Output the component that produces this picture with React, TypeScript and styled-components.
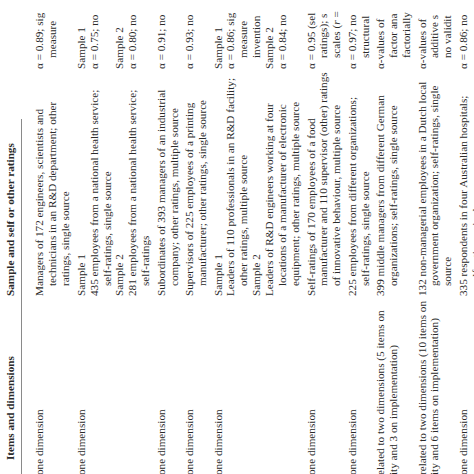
import { Fragment } from "react";
import styled, { createGlobalStyle } from "styled-components";

const GlobalStyle = createGlobalStyle`
  html, body {
    margin: 0;
    padding: 0;
    background: #fff;
  }
`;

const COLUMNS = "179px 227px 1fr";

const Frame = styled.div`
  width: 474px;
  height: 474px;
  overflow: hidden;
  background: #fff;
`;

// the page is a table printed sideways, so it is laid out upright and turned
const Sheet = styled.div`
  width: 474px;
  height: 474px;
  transform: rotate(-90deg);
  font-family: "Liberation Serif", "Times New Roman", serif;
  font-size: 11.2px;
  line-height: 12.9px;
  color: #2b2b2b;
`;

const Head = styled.div`
  display: grid;
  grid-template-columns: ${COLUMNS};
  margin-left: -1px;
`;

const HeadCell = styled.div<{ $indent?: number }>`
  padding: 4px 0 4px ${(p) => p.$indent ?? 0}px;
  font-weight: bold;
  white-space: nowrap;
`;

const HeadRule = styled.div`
  grid-column: 1 / 3;
  height: 1px;
  margin-right: 50px;
  background: #8a8a8a;
`;

const Body = styled.div`
  display: grid;
  grid-template-columns: ${COLUMNS};
  row-gap: 2.6px;
  padding-top: 11.5px;
  margin-left: -1px;
`;

const Cell = styled.div`
  display: flex;
  flex-direction: column;
  min-width: 0;
`;

const Line = styled.div<{ $indent?: number }>`
  min-height: 12.9px;
  padding-left: ${(p) => p.$indent ?? 0}px;
  white-space: nowrap;
`;

type Text = string | { t: string; i: number };

interface IRow {
  items: Text[];
  sample: Text[];
  rel: Text[];
}

const s = (t: string): Text => ({ t, i: 10 });
const r = (t: string): Text => ({ t, i: 11 });

const rows: IRow[] = [
  {
    items: ["one dimension"],
    sample: [
      "Managers of 172 engineers, scientists and",
      s("technicians in an R&D department; other"),
      s("ratings, single source"),
    ],
    rel: ["α = 0.89; sig", r("measure")],
  },
  {
    items: ["one dimension"],
    sample: [
      "Sample 1",
      "435 employees from a national health service;",
      s("self-ratings, single source"),
      "Sample 2",
      "281 employees from a national health service;",
      s("self-ratings"),
    ],
    rel: ["Sample 1", "α = 0.75; no", "", "Sample 2", "α = 0.80; no"],
  },
  {
    items: ["one dimension"],
    sample: [
      "Subordinates of 393 managers of an industrial",
      s("company; other ratings, multiple source"),
    ],
    rel: ["α = 0.91; no"],
  },
  {
    items: ["one dimension"],
    sample: [
      "Supervisors of 225 employees of a printing",
      s("manufacturer; other ratings, single source"),
    ],
    rel: ["α = 0.93; no"],
  },
  {
    items: ["one dimension"],
    sample: [
      "Sample 1",
      "Leaders of 110 professionals in an R&D facility;",
      s("other ratings, multiple source"),
      "Sample 2",
      "Leaders of R&D engineers working at four",
      s("locations of a manufacturer of electronic"),
      s("equipment; other ratings, multiple source"),
    ],
    rel: [
      "Sample 1",
      "α = 0.86; sig",
      r("measure"),
      r("invention"),
      "Sample 2",
      "α = 0.84; no",
    ],
  },
  {
    items: ["one dimension"],
    sample: [
      "Self-ratings of 170 employees of a food",
      s("manufacturer and 110 supervisor (other) ratings"),
      s("of innovative behaviour, multiple source"),
    ],
    rel: ["α = 0.95 (sel", r("ratings); s"), r("scales (r =")],
  },
  {
    items: ["one dimension"],
    sample: [
      "225 employees from different organizations;",
      s("self-ratings, single source"),
    ],
    rel: ["α = 0.97; no", r("structural")],
  },
  {
    items: [
      "elated to two dimensions (5 items on",
      "ity and 3 on implementation)",
    ],
    sample: [
      "399 middle managers from different German",
      s("organizations; self-ratings, single source"),
    ],
    rel: ["α-values of", r("factor ana"), r("factorially")],
  },
  {
    items: [
      "related to two dimensions (10 items on",
      "ity and 6 items on implementation)",
    ],
    sample: [
      "132 non-managerial employees in a Dutch local",
      s("government organization; self-ratings, single"),
      s("source"),
    ],
    rel: ["α-values of", r("additive s"), r("no validit")],
  },
  {
    items: ["one dimension"],
    sample: [
      "335 respondents in four Australian hospitals;",
      s("self-ratings, single source"),
    ],
    rel: ["α = 0.86; no"],
  },
];

function renderText(text: string) {
  // the correlation symbol is set in italics
  if (text.includes("(r =")) {
    const [before] = text.split("r =");
    return (
      <>
        {before}
        <i>r</i> =
      </>
    );
  }
  return text;
}

function Lines({ lines }: { lines: Text[] }) {
  return (
    <Cell>
      {lines.map((line, idx) => {
        const item = typeof line === "string" ? { t: line, i: 0 } : line;
        return (
          <Line key={idx} $indent={item.i}>
            {renderText(item.t)}
          </Line>
        );
      })}
    </Cell>
  );
}

export default function App() {
  return (
    <>
      <GlobalStyle />
      <Frame>
        <Sheet>
          <Head>
            <HeadCell $indent={15}>Items and dimensions</HeadCell>
            <HeadCell>Sample and self or other ratings</HeadCell>
            <HeadCell />
            <HeadRule />
          </Head>
          <Body>
            {rows.map((row, idx) => (
              <Fragment key={idx}>
                <Lines lines={row.items} />
                <Lines lines={row.sample} />
                <Lines lines={row.rel} />
              </Fragment>
            ))}
          </Body>
        </Sheet>
      </Frame>
    </>
  );
}
